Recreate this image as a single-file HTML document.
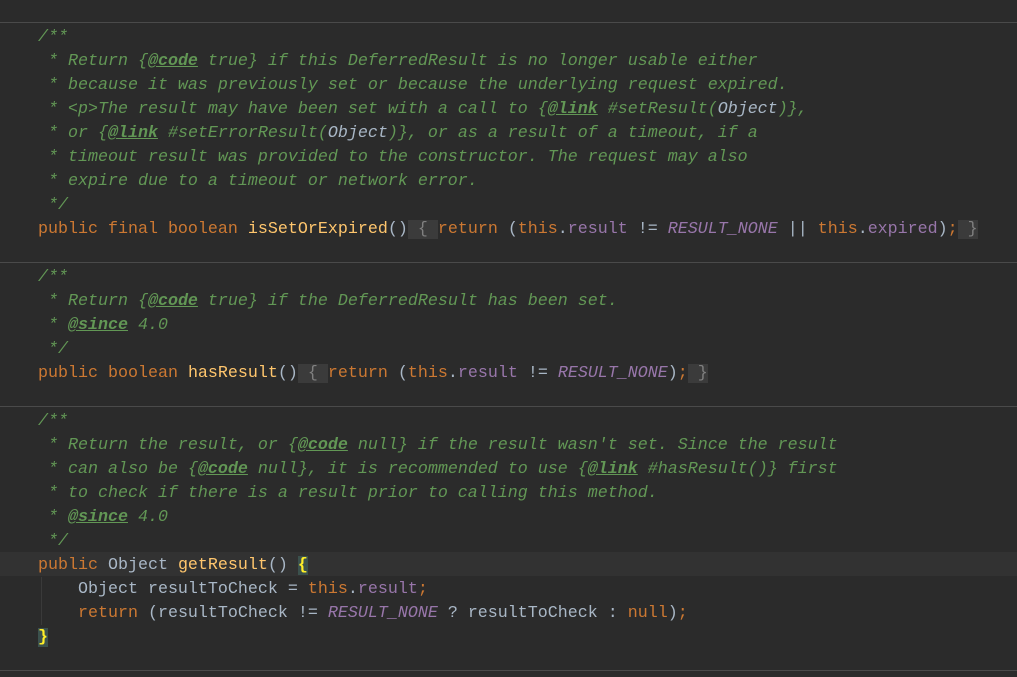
<!DOCTYPE html><html><head><style>
body{margin:0;width:1017px;height:677px;background:#2b2b2b;overflow:hidden;position:relative;font-family:"Liberation Mono",monospace;font-size:16.67px;color:#a9b7c6}
.r{position:absolute;left:38px;height:24px;line-height:24px;white-space:pre;margin-top:2px}
.c{color:#629755;font-style:italic}
.t{font-weight:bold;text-decoration:underline}
.k{color:#cc7832}.m{color:#ffc66d}.f{color:#9876aa}.s{color:#9876aa;font-style:italic}
.h{background:#3b3b3b;color:#808080}.g{color:#a9b7c6}
.b{background:#3b514d;color:#ffef28;font-weight:bold}
.sep{position:absolute;left:0;width:1017px;height:1px;background:#4a4a4a}
.cur{position:absolute;left:0;top:552px;width:1017px;height:24px;background:#323232}
</style></head><body>
<div class="sep" style="top:22px"></div><div class="sep" style="top:262px"></div><div class="sep" style="top:406px"></div><div class="sep" style="top:670px"></div>
<div class="cur"></div>
<div style="position:absolute;left:41px;top:577px;width:1px;height:48px;background:#3a3a3a"></div>
<div class="r c" style="top:24px">/**</div>
<div class="r c" style="top:48px"> * Return {<span class="t">@code</span> true} if this DeferredResult is no longer usable either</div>
<div class="r c" style="top:72px"> * because it was previously set or because the underlying request expired.</div>
<div class="r c" style="top:96px"> * &lt;p&gt;The result may have been set with a call to {<span class="t">@link</span> #setResult(<span class="g">Object</span>)},</div>
<div class="r c" style="top:120px"> * or {<span class="t">@link</span> #setErrorResult(<span class="g">Object</span>)}, or as a result of a timeout, if a</div>
<div class="r c" style="top:144px"> * timeout result was provided to the constructor. The request may also</div>
<div class="r c" style="top:168px"> * expire due to a timeout or network error.</div>
<div class="r c" style="top:192px"> */</div>
<div class="r" style="top:216px"><span class="k">public final boolean </span><span class="m">isSetOrExpired</span>()<span class="h"> { </span><span class="k">return </span>(<span class="k">this</span>.<span class="f">result</span> != <span class="s">RESULT_NONE</span> || <span class="k">this</span>.<span class="f">expired</span>)<span class="k">;</span><span class="h"> }</span></div>
<div class="r c" style="top:264px">/**</div>
<div class="r c" style="top:288px"> * Return {<span class="t">@code</span> true} if the DeferredResult has been set.</div>
<div class="r c" style="top:312px"> * <span class="t">@since</span> 4.0</div>
<div class="r c" style="top:336px"> */</div>
<div class="r" style="top:360px"><span class="k">public boolean </span><span class="m">hasResult</span>()<span class="h"> { </span><span class="k">return </span>(<span class="k">this</span>.<span class="f">result</span> != <span class="s">RESULT_NONE</span>)<span class="k">;</span><span class="h"> }</span></div>
<div class="r c" style="top:408px">/**</div>
<div class="r c" style="top:432px"> * Return the result, or {<span class="t">@code</span> null} if the result wasn't set. Since the result</div>
<div class="r c" style="top:456px"> * can also be {<span class="t">@code</span> null}, it is recommended to use {<span class="t">@link</span> #hasResult()} first</div>
<div class="r c" style="top:480px"> * to check if there is a result prior to calling this method.</div>
<div class="r c" style="top:504px"> * <span class="t">@since</span> 4.0</div>
<div class="r c" style="top:528px"> */</div>
<div class="r" style="top:552px"><span class="k">public </span>Object <span class="m">getResult</span>() <span class="b">{</span></div>
<div class="r" style="top:576px">    Object resultToCheck = <span class="k">this</span>.<span class="f">result</span><span class="k">;</span></div>
<div class="r" style="top:600px">    <span class="k">return </span>(resultToCheck != <span class="s">RESULT_NONE</span> ? resultToCheck : <span class="k">null</span>)<span class="k">;</span></div>
<div class="r" style="top:624px"><span class="b">}</span></div>
</body></html>
